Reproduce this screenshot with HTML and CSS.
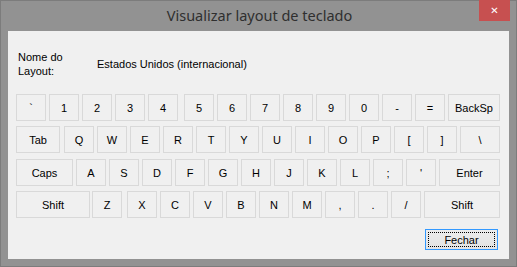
FILE: index.html
```html
<!DOCTYPE html>
<html lang="pt">
<head>
    <meta charset="UTF-8">
    <title>Visualizar layout de teclado</title>
    <link rel="stylesheet" href="styles.css">
</head>
<body>
    <div class="window">
        <div class="titlebar">
            <span class="title">Visualizar layout de teclado</span>
            <button class="close">&#x2715;</button>
        </div>
        <div class="client">
            <div class="layout-info">
                <div class="layout-label">Nome do<br>Layout:</div>
                <div class="layout-name">Estados Unidos (internacional)</div>
            </div>
            <div class="keyboard">
                <div class="row row1">
                    <div class="key">`</div>
                    <div class="key">1</div>
                    <div class="key">2</div>
                    <div class="key">3</div>
                    <div class="key">4</div>
                    <div class="key gap-wide">5</div>
                    <div class="key">6</div>
                    <div class="key">7</div>
                    <div class="key">8</div>
                    <div class="key">9</div>
                    <div class="key">0</div>
                    <div class="key">-</div>
                    <div class="key">=</div>
                    <div class="key backsp">BackSp</div>
                </div>
                <div class="row row2">
                    <div class="key tab">Tab</div>
                    <div class="key gap-plus1">Q</div>
                    <div class="key">W</div>
                    <div class="key">E</div>
                    <div class="key">R</div>
                    <div class="key">T</div>
                    <div class="key">Y</div>
                    <div class="key">U</div>
                    <div class="key">I</div>
                    <div class="key">O</div>
                    <div class="key">P</div>
                    <div class="key">[</div>
                    <div class="key">]</div>
                    <div class="key backslash">\</div>
                </div>
                <div class="row row3">
                    <div class="key caps">Caps</div>
                    <div class="key">A</div>
                    <div class="key">S</div>
                    <div class="key">D</div>
                    <div class="key">F</div>
                    <div class="key">G</div>
                    <div class="key">H</div>
                    <div class="key">J</div>
                    <div class="key">K</div>
                    <div class="key">L</div>
                    <div class="key">;</div>
                    <div class="key">'</div>
                    <div class="key enter">Enter</div>
                </div>
                <div class="row row4">
                    <div class="key lshift">Shift</div>
                    <div class="key gap-minus1">Z</div>
                    <div class="key gap-plus2">X</div>
                    <div class="key">C</div>
                    <div class="key">V</div>
                    <div class="key">B</div>
                    <div class="key">N</div>
                    <div class="key">M</div>
                    <div class="key">,</div>
                    <div class="key">.</div>
                    <div class="key">/</div>
                    <div class="key rshift">Shift</div>
                </div>
            </div>
            <div class="footer">
                <button class="btn-close"><span class="focus">Fechar</span></button>
            </div>
        </div>
    </div>
</body>
</html>
```

FILE: styles.css
```css
body {
    margin: 0;
    font-family: "Liberation Sans", Arial, sans-serif;
    font-size: 11px;
    color: #000;
}
.window {
    width: 517px;
    height: 267px;
    box-sizing: border-box;
    background: #929292;
    border: 1px solid #7c7c7c;
    display: flex;
    flex-direction: column;
}
.titlebar {
    height: 30px;
    position: relative;
    display: flex;
    justify-content: center;
}
.title {
    font-family: "Noto Sans", "Open Sans", sans-serif;
    font-size: 14.5px;
    color: #2f2f2f;
    line-height: 29px;
    margin-left: 2px;
}
.close {
    position: absolute;
    top: -1px;
    right: 6px;
    width: 31px;
    height: 21px;
    border: none;
    padding: 0;
    background: #c75050;
    color: #fff;
    font-size: 10px;
    font-weight: bold;
    font-family: "DejaVu Sans", sans-serif;
}
.client {
    margin: 0 7px;
    height: 228px;
    background: #f0f0f0;
    padding: 0 8px;
    box-sizing: border-box;
}
.layout-info {
    display: flex;
    align-items: center;
    padding-top: 20px;
    height: 43px;
    box-sizing: border-box;
}
.layout-label {
    width: 79px;
    padding-left: 2px;
    line-height: 14px;
    padding-top: 3px;
}
.layout-name {
    padding-top: 2px;
}
.row {
    display: flex;
    gap: 3px;
    height: 27px;
}
.row1 {
    margin-top: 20px;
}
.row2 {
    margin-top: 5px;
}
.row3 {
    margin-top: 6px;
}
.row4 {
    margin-top: 5px;
}
.key {
    width: 30px;
    box-sizing: border-box;
    border: 1px solid #d9d9d9;
    background: #f0f0f0;
    display: flex;
    align-items: center;
    justify-content: center;
    padding-top: 1px;
}
.gap-wide {
    margin-left: 3px;
}
.gap-plus1 {
    margin-left: 1px;
}
.gap-plus2 {
    margin-left: 2px;
}
.gap-minus1 {
    margin-left: -1px;
}
.backsp {
    width: 52px;
}
.tab {
    width: 44px;
}
.backslash {
    width: 40px;
}
.caps {
    width: 57px;
}
.enter {
    width: 61px;
}
.lshift {
    width: 74px;
}
.rshift {
    width: 76px;
}
.footer {
    display: flex;
    justify-content: flex-end;
    margin-top: 11px;
    padding-right: 3px;
}
.btn-close {
    width: 73px;
    height: 21px;
    padding: 2px;
    border: 1px solid #3399ff;
    background: linear-gradient(#ececec, #e3e3e3);
    font-family: "Liberation Sans", Arial, sans-serif;
    font-size: 11px;
    color: #000;
    box-sizing: border-box;
}
.focus {
    display: flex;
    align-items: center;
    justify-content: center;
    height: 100%;
    border: 1px dotted #000;
    box-sizing: border-box;
    padding-top: 1px;
}
```
